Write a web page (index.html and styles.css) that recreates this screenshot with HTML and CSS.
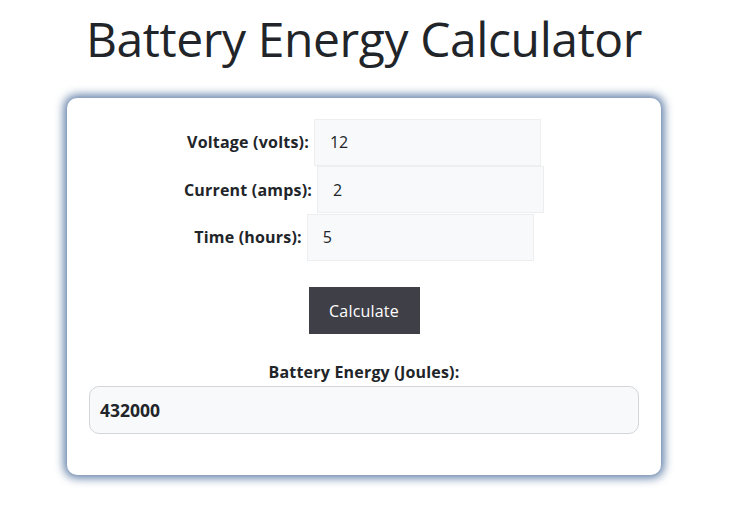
FILE: index.html
```html
<!DOCTYPE html>
<html lang="en">
<head>
<meta charset="utf-8">
<title>Battery Energy Calculator</title>
<link rel="stylesheet" href="styles.css">
</head>
<body>
<div class="page">
  <h1 class="title">Battery Energy Calculator</h1>
  <div class="card">
    <div class="row">
      <label class="label" for="v">Voltage (volts):</label>
      <input class="field" id="v" type="text" value="12">
    </div>
    <div class="row">
      <label class="label" for="c">Current (amps):</label>
      <input class="field" id="c" type="text" value="2">
    </div>
    <div class="row">
      <label class="label" for="t">Time (hours):</label>
      <input class="field" id="t" type="text" value="5">
    </div>
    <div class="actions">
      <button class="btn" type="button">Calculate</button>
    </div>
    <div class="result-label">Battery Energy (Joules):</div>
    <div class="result">432000</div>
  </div>
</div>
</body>
</html>
```
FILE: styles.css
```css
html, body {
  margin: 0;
  padding: 0;
  background: #ffffff;
}
body {
  font-family: "Open Sans", "Noto Sans", sans-serif;
  color: #212529;
}
.page {
  width: 728px;
  padding-bottom: 30px;
  display: flex;
  flex-direction: column;
  align-items: center;
}
.title {
  margin: 10px 0 30px;
  font-size: 48px;
  font-weight: 400;
  line-height: 1.2;
  letter-spacing: -0.4px;
  color: #212529;
}
.card {
  box-sizing: border-box;
  width: 594px;
  padding: 21px 21px 41px;
  background: #ffffff;
  border-radius: 10px;
  box-shadow: 0 0 10px 3px rgba(75, 110, 155, 0.9);
  display: flex;
  flex-direction: column;
  align-items: center;
}
.row {
  display: flex;
  align-items: center;
  justify-content: center;
  height: 47.5px;
}
.label {
  font-weight: 700;
  font-size: 16px;
  letter-spacing: 0.2px;
  margin-right: 5px;
}
.field {
  box-sizing: border-box;
  width: 227px;
  height: 47px;
  padding: 0 15px;
  border: 1px solid #eceef0;
  background: #f8f9fa;
  font-family: inherit;
  font-size: 16px;
  color: #212529;
  outline: none;
}
.actions {
  margin-top: 26px;
}
.btn {
  box-sizing: border-box;
  width: 111px;
  height: 47px;
  border: none;
  border-radius: 0;
  background: #3f4047;
  color: #ffffff;
  font-family: inherit;
  font-size: 16px;
  letter-spacing: 0.2px;
}
.result-label {
  margin-top: 28px;
  font-weight: 700;
  font-size: 16px;
  letter-spacing: 0.2px;
  line-height: 20px;
}
.result {
  box-sizing: border-box;
  align-self: stretch;
  margin: 4px 1px 0;
  height: 48px;
  padding: 0 10px;
  display: flex;
  align-items: center;
  border: 1px solid #d3d5d8;
  border-radius: 10px;
  background: #f8f9fa;
  font-weight: 700;
  font-size: 17.5px;
}
```
